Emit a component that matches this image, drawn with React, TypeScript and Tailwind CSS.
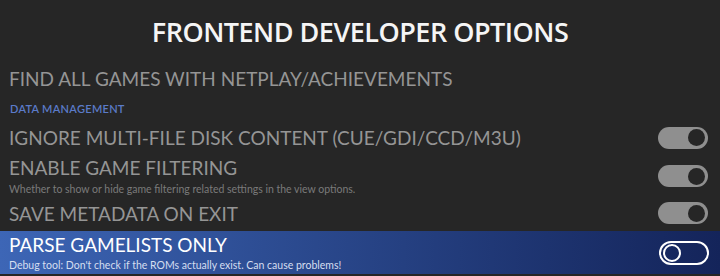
import React from "react";

function Toggle({ selected = false }: { selected?: boolean }) {
  if (selected) {
    return (
      <div className="relative h-[24px] w-[50px] rounded-full border-2 border-white">
        <div className="absolute left-[2px] top-[1px] h-[18px] w-[18px] rounded-full border-2 border-white" />
      </div>
    );
  }
  return (
    <div className="flex h-[22px] w-[50px] items-center justify-end rounded-full bg-[#8f8f8f] pr-[3px]">
      <div className="h-[17px] w-[17px] rounded-full bg-[#262626]" />
    </div>
  );
}

const itemFont = { fontFamily: "Lato, 'Noto Sans', sans-serif" };

export default function App() {
  return (
    <div className="h-[276px] w-[720px] overflow-hidden bg-[#262626]" style={itemFont}>
      <div className="flex h-[60px] items-center justify-center pt-[3px]">
        <h1
          className="text-[27px] font-semibold leading-none tracking-[-0.5px] text-[#f5f5f5]"
          style={{ fontFamily: "'Open Sans', sans-serif" }}
        >
          FRONTEND DEVELOPER OPTIONS
        </h1>
      </div>
      <div className="flex h-[36px] items-center px-[9px]">
        <span className="text-[19px] leading-none text-[#959595]">FIND ALL GAMES WITH NETPLAY/ACHIEVEMENTS</span>
      </div>
      <div className="flex h-[24px] items-center px-[10px]">
        <span className="text-[11px] font-semibold leading-none tracking-[0.3px] text-[#5b7bc9]">DATA MANAGEMENT</span>
      </div>
      <div className="flex h-[35px] items-center justify-between pl-[9px] pr-[12px]">
        <span className="text-[19px] leading-none text-[#959595]">IGNORE MULTI-FILE DISK CONTENT (CUE/GDI/CCD/M3U)</span>
        <Toggle />
      </div>
      <div className="flex h-[42px] items-center justify-between pl-[9px] pr-[12px]">
        <div className="flex flex-col gap-[7px]">
          <span className="text-[19px] leading-none text-[#959595]">ENABLE GAME FILTERING</span>
          <span className="text-[10.5px] leading-none text-[#7a7a7a]">
            Whether to show or hide game filtering related settings in the view options.
          </span>
        </div>
        <Toggle />
      </div>
      <div className="flex h-[32px] items-center justify-between pl-[9px] pr-[12px]">
        <span className="text-[19px] leading-none text-[#959595]">SAVE METADATA ON EXIT</span>
        <Toggle />
      </div>
      <div className="mt-[2px] flex h-[43px] items-center justify-between bg-gradient-to-r from-[#3d66b6] to-[#14245a] pl-[9px] pr-[11px]">
        <div className="flex flex-col gap-[6px]">
          <span className="text-[19px] leading-none text-white">PARSE GAMELISTS ONLY</span>
          <span className="text-[10.5px] leading-none text-[#d5def0]">
            Debug tool: Don't check if the ROMs actually exist. Can cause problems!
          </span>
        </div>
        <Toggle selected />
      </div>
    </div>
  );
}
